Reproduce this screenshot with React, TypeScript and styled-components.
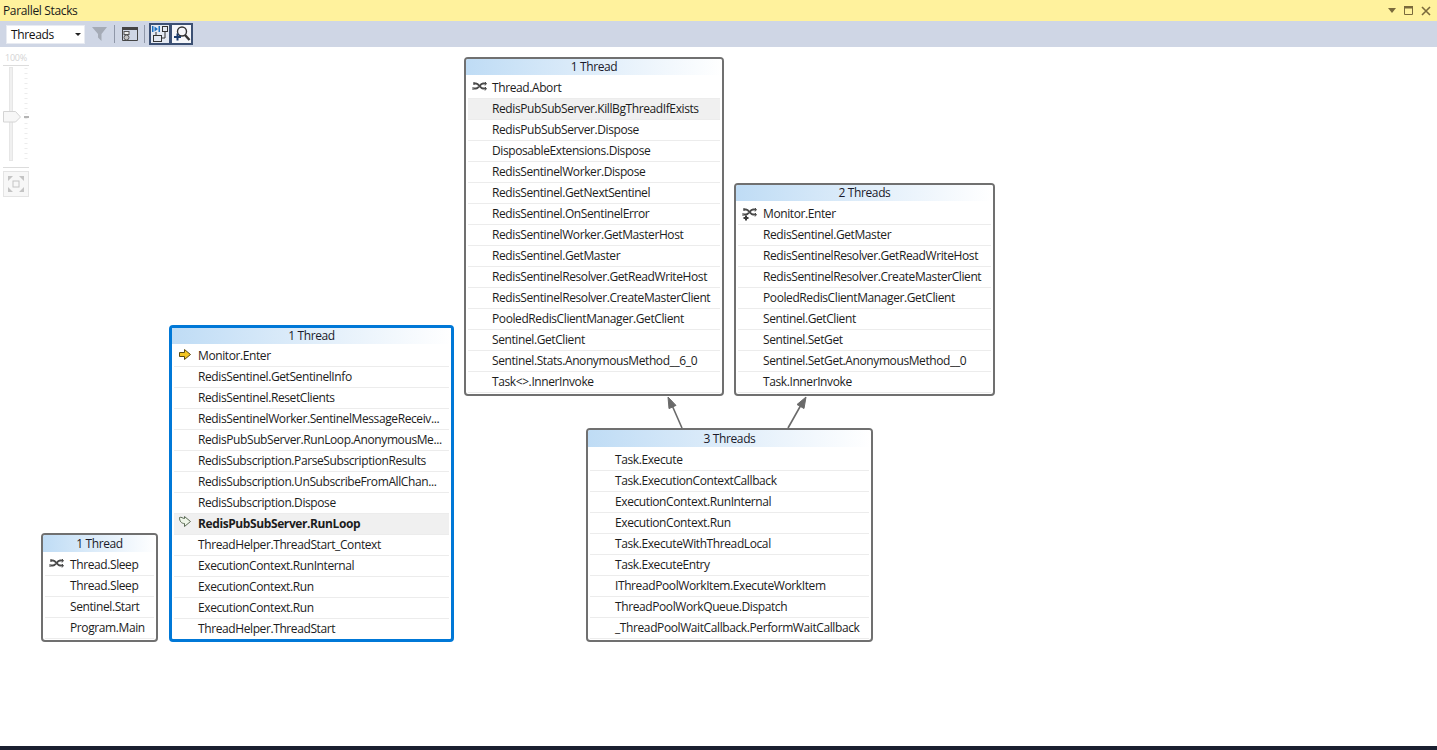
import styled, { createGlobalStyle } from 'styled-components';

const GlobalStyle = createGlobalStyle`
  html, body { margin: 0; padding: 0; background: #fff; }
  body { font-family: "Open Sans", "Liberation Sans", sans-serif; }
`;

const Page = styled.div`
  width: 1437px;
  height: 750px;
  display: flex;
  flex-direction: column;
  overflow: hidden;
`;

const TitleBar = styled.div`
  height: 21px;
  flex: none;
  background: #fff29d;
  display: flex;
  align-items: center;
  justify-content: space-between;
  padding: 0 6px 0 3px;
  font-size: 12px;
  letter-spacing: -0.35px;
  color: #1a1a1a;
`;

const WindowButtons = styled.div`
  display: flex;
  align-items: center;
  gap: 8px;
  color: #7a6a3c;
`;

const Toolbar = styled.div`
  height: 26px;
  flex: none;
  background: #cfd6e5;
  display: flex;
  align-items: center;
  padding-left: 6px;
`;

const Combo = styled.div`
  width: 79px;
  height: 19px;
  box-sizing: border-box;
  background: #fff;
  border: 1px solid #e8ebf2;
  display: flex;
  align-items: center;
  justify-content: space-between;
  padding: 0 3px 0 4px;
  font-size: 12px;
  letter-spacing: -0.35px;
  color: #111;
  margin-right: 7px;
  &::after {
    content: '';
    border-left: 3px solid transparent;
    border-right: 3px solid transparent;
    border-top: 3px solid #222;
  }
`;

const Separator = styled.div<{ $after: number }>`
  width: 1px;
  height: 18px;
  background: #8f97a8;
  margin: 0 ${(p) => p.$after}px 0 6px;
`;

const ToolIcon = styled.div`
  width: 16px;
  height: 16px;
  display: flex;
`;

const ToggleGroup = styled.div`
  display: flex;
`;

const ToggleButton = styled.div<{ $light?: boolean }>`
  width: 22px;
  height: 22px;
  box-sizing: border-box;
  border: 2px solid #3c5073;
  background: ${(p) => (p.$light ? '#f6f7fa' : '#e4e9f2')};
  display: flex;
  align-items: center;
  justify-content: center;
  & + & {
    border-left-width: 1px;
  }
`;

const Canvas = styled.div`
  flex: 1;
  position: relative;
  background: #fff;
`;

const ZoomPanel = styled.div`
  position: absolute;
  left: 3px;
  top: 4px;
  width: 26px;
  display: flex;
  flex-direction: column;
  align-items: center;
`;

const ZoomLabel = styled.div`
  width: 26px;
  height: 14px;
  text-align: center;
  font-size: 9px;
  line-height: 13px;
  letter-spacing: -0.2px;
  color: #d4d4d4;
  border-bottom: 1px solid #dcdcdc;
`;

const SliderArea = styled.div`
  height: 101px;
  width: 26px;
  border-bottom: 1px solid #dcdcdc;
`;

const FitButton = styled.div`
  margin-top: 3px;
  width: 26px;
  height: 26px;
  box-sizing: border-box;
  border: 1px solid #e4e4e4;
  background: #f7f7f7;
  display: flex;
  align-items: center;
  justify-content: center;
`;

const Node = styled.div<{ $x: number; $y: number; $w: number; $h: number; $active?: boolean }>`
  position: absolute;
  left: ${(p) => p.$x}px;
  top: ${(p) => p.$y}px;
  width: ${(p) => p.$w}px;
  height: ${(p) => p.$h}px;
  box-sizing: border-box;
  background: #fff;
  border: ${(p) => (p.$active ? '3px solid #0078d7' : '2px solid #707070')};
  border-radius: 4px;
  overflow: hidden;
`;

const NodeHeader = styled.div<{ $h: number; $gap: number }>`
  height: ${(p) => p.$h}px;
  box-sizing: border-box;
  padding-top: ${(p) => p.$h - 16}px;
  line-height: 16px;
  text-align: center;
  font-size: 12px;
  letter-spacing: -0.38px;
  color: #1a1a2a;
  background: linear-gradient(to right, #bfdcf5 0%, #e6f1fb 60%, #ffffff 100%);
  margin-bottom: ${(p) => p.$gap}px;
`;

const Row = styled.div<{ $hl?: boolean; $bold?: boolean; $pad: number }>`
  height: 21px;
  box-sizing: border-box;
  margin: 0 2px;
  padding-left: ${(p) => p.$pad}px;
  position: relative;
  line-height: 20px;
  font-size: 12px;
  letter-spacing: -0.4px;
  white-space: nowrap;
  color: #1c1c1c;
  font-weight: ${(p) => (p.$bold ? 700 : 400)};
  background: ${(p) => (p.$hl ? '#f0f0f0' : 'transparent')};
  border-bottom: 1px solid #ececec;
`;

const RowIcon = styled.span`
  position: absolute;
  left: 4px;
  top: 2px;
  display: flex;
`;

const Arrows = styled.svg`
  position: absolute;
  left: 0;
  top: 0;
  width: 1437px;
  height: 699px;
  pointer-events: none;
`;

const TaskBar = styled.div`
  height: 4px;
  flex: none;
  background: #1a2030;
`;

type IconKind = 'wait' | 'waitMulti' | 'current' | 'context';

function StatusIcon({ kind }: { kind: IconKind }) {
  if (kind === 'current') {
    return (
      <svg width="14" height="14" viewBox="0 0 14 14">
        <path d="M1.5 4.5h5V1.5L12.5 6.5l-6 5V8.5h-5z" fill="#f3c623" stroke="#5a4a10" strokeWidth="1" />
      </svg>
    );
  }
  if (kind === 'context') {
    return (
      <svg width="14" height="14" viewBox="0 0 14 14">
        <path d="M1.5 1.5c2-1 3 1 5 1h0V.5l6 5-6 5V7.5c-3 0-5-2-5-6z" fill="#eef5e8" stroke="#5b6b55" strokeWidth="1" />
      </svg>
    );
  }
  return (
    <svg width="16" height="15" viewBox="0 0 16 15">
      <path d="M1.5 3.5l2.5 0c3 0 4 5 7 5l3 0M1.5 8.5l2.5 0c3 0 4-5 7-5l3 0" fill="none" stroke="#4a4a4a" strokeWidth="2" />
      <path d="M2 2v3M13 7l1.5 1.5-1.5 2M13 2l1.5 1.5-1.5 2M1 7v3" fill="none" stroke="#4a4a4a" strokeWidth="1" />
      {kind === 'waitMulti' && <path d="M4 9.5v5M1.5 12h5" stroke="#3a3a3a" strokeWidth="2" />}
    </svg>
  );
}

type RowData = { t: string; icon?: IconKind; hl?: boolean; bold?: boolean };

type NodeData = {
  title: string;
  x: number;
  y: number;
  w: number;
  h: number;
  headerH: number;
  gap: number;
  active?: boolean;
  rows: RowData[];
};

const nodes: NodeData[] = [
  {
    title: '1 Thread', x: 464, y: 10, w: 260, h: 339, headerH: 16, gap: 3,
    rows: [
      { t: 'Thread.Abort', icon: 'wait' },
      { t: 'RedisPubSubServer.KillBgThreadIfExists', hl: true },
      { t: 'RedisPubSubServer.Dispose' },
      { t: 'DisposableExtensions.Dispose' },
      { t: 'RedisSentinelWorker.Dispose' },
      { t: 'RedisSentinel.GetNextSentinel' },
      { t: 'RedisSentinel.OnSentinelError' },
      { t: 'RedisSentinelWorker.GetMasterHost' },
      { t: 'RedisSentinel.GetMaster' },
      { t: 'RedisSentinelResolver.GetReadWriteHost' },
      { t: 'RedisSentinelResolver.CreateMasterClient' },
      { t: 'PooledRedisClientManager.GetClient' },
      { t: 'Sentinel.GetClient' },
      { t: 'Sentinel.Stats.AnonymousMethod__6_0' },
      { t: 'Task<>.InnerInvoke' },
    ],
  },
  {
    title: '2 Threads', x: 734, y: 136, w: 261, h: 213, headerH: 16, gap: 3,
    rows: [
      { t: 'Monitor.Enter', icon: 'waitMulti' },
      { t: 'RedisSentinel.GetMaster' },
      { t: 'RedisSentinelResolver.GetReadWriteHost' },
      { t: 'RedisSentinelResolver.CreateMasterClient' },
      { t: 'PooledRedisClientManager.GetClient' },
      { t: 'Sentinel.GetClient' },
      { t: 'Sentinel.SetGet' },
      { t: 'Sentinel.SetGet.AnonymousMethod__0' },
      { t: 'Task.InnerInvoke' },
    ],
  },
  {
    title: '3 Threads', x: 586, y: 381, w: 287, h: 214, headerH: 17, gap: 3,
    rows: [
      { t: 'Task.Execute' },
      { t: 'Task.ExecutionContextCallback' },
      { t: 'ExecutionContext.RunInternal' },
      { t: 'ExecutionContext.Run' },
      { t: 'Task.ExecuteWithThreadLocal' },
      { t: 'Task.ExecuteEntry' },
      { t: 'IThreadPoolWorkItem.ExecuteWorkItem' },
      { t: 'ThreadPoolWorkQueue.Dispatch' },
      { t: '_ThreadPoolWaitCallback.PerformWaitCallback' },
    ],
  },
  {
    title: '1 Thread', x: 169, y: 278, w: 285, h: 317, headerH: 16, gap: 2, active: true,
    rows: [
      { t: 'Monitor.Enter', icon: 'current' },
      { t: 'RedisSentinel.GetSentinelInfo' },
      { t: 'RedisSentinel.ResetClients' },
      { t: 'RedisSentinelWorker.SentinelMessageReceiv...' },
      { t: 'RedisPubSubServer.RunLoop.AnonymousMe...' },
      { t: 'RedisSubscription.ParseSubscriptionResults' },
      { t: 'RedisSubscription.UnSubscribeFromAllChan...' },
      { t: 'RedisSubscription.Dispose' },
      { t: 'RedisPubSubServer.RunLoop', icon: 'context', hl: true, bold: true },
      { t: 'ThreadHelper.ThreadStart_Context' },
      { t: 'ExecutionContext.RunInternal' },
      { t: 'ExecutionContext.Run' },
      { t: 'ExecutionContext.Run' },
      { t: 'ThreadHelper.ThreadStart' },
    ],
  },
  {
    title: '1 Thread', x: 41, y: 486, w: 117, h: 109, headerH: 17, gap: 3,
    rows: [
      { t: 'Thread.Sleep', icon: 'wait' },
      { t: 'Thread.Sleep' },
      { t: 'Sentinel.Start' },
      { t: 'Program.Main' },
    ],
  },
];

function StackNode({ node }: { node: NodeData }) {
  const pad = node.x === 464 ? 24 : node.active ? 24 : 25;
  return (
    <Node $x={node.x} $y={node.y} $w={node.w} $h={node.h} $active={node.active}>
      <NodeHeader $h={node.headerH} $gap={node.gap}>{node.title}</NodeHeader>
      {node.rows.map((r, i) => (
        <Row key={i} $hl={r.hl} $bold={r.bold} $pad={pad}>
          {r.icon && (
            <RowIcon>
              <StatusIcon kind={r.icon} />
            </RowIcon>
          )}
          {r.t}
        </Row>
      ))}
    </Node>
  );
}

export default function App() {
  return (
    <Page>
      <GlobalStyle />
      <TitleBar>
        <span>Parallel Stacks</span>
        <WindowButtons>
          <svg width="8" height="5" viewBox="0 0 8 5">
            <path d="M0 0h8L4 5z" fill="currentColor" />
          </svg>
          <svg width="9" height="9" viewBox="0 0 9 9">
            <path d="M.5.5h8v8h-8z" fill="none" stroke="currentColor" />
            <path d="M0 0h9v2.5H0z" fill="currentColor" />
          </svg>
          <svg width="10" height="10" viewBox="0 0 10 10">
            <path d="M1 1l8 8M9 1l-8 8" stroke="currentColor" strokeWidth="1.6" />
          </svg>
        </WindowButtons>
      </TitleBar>
      <Toolbar>
        <Combo>Threads</Combo>
        <ToolIcon>
          <svg width="16" height="16" viewBox="0 0 16 16">
            <path d="M0 1h15L9.5 8v7L6 11.5V8z" fill="#a5abb6" />
          </svg>
        </ToolIcon>
        <Separator $after={7} />
        <ToolIcon>
          <svg width="16" height="16" viewBox="0 0 16 16">
            <path d="M.5 1.5h15v13h-15z" fill="none" stroke="#444" />
            <path d="M0 1h16v3H0z" fill="#444" />
            <rect x="2" y="5.5" width="5" height="3" fill="#eee" stroke="#555" />
            <circle cx="4.5" cy="11.5" r="2.5" fill="#c4c4c4" stroke="#555" />
          </svg>
        </ToolIcon>
        <Separator $after={4} />
        <ToggleGroup>
          <ToggleButton>
            <svg width="18" height="18" viewBox="0 0 18 18">
              <path d="M1 1h1.5v6H1zM3.5 1.5L7 4 3.5 6.5zM7.5 1h1.5v6H7.5z" fill="#1a6fc0" />
              <rect x="11.5" y="1.5" width="5" height="5" fill="none" stroke="#333" />
              <rect x="2.5" y="10.5" width="8" height="6" fill="none" stroke="#333" />
              <path d="M14 7v6h-3.5M5 7v3.5" fill="none" stroke="#333" />
            </svg>
          </ToggleButton>
          <ToggleButton $light>
            <svg width="18" height="18" viewBox="0 0 18 18">
              <circle cx="9" cy="6.5" r="4.5" fill="none" stroke="#333" strokeWidth="1.4" />
              <path d="M12 10l4.5 5" stroke="#333" strokeWidth="2.4" />
              <path d="M1 12h7M4.5 8.5v7" stroke="#1c3d6e" strokeWidth="2" />
            </svg>
          </ToggleButton>
        </ToggleGroup>
      </Toolbar>
      <Canvas>
        <ZoomPanel>
          <ZoomLabel>100%</ZoomLabel>
          <SliderArea>
            <svg width="26" height="101" viewBox="0 0 26 101">
              <rect x="6.5" y="1.5" width="3" height="93" fill="#f0f0f0" stroke="#e6e6e6" />
              <path d="M23 2v92" stroke="#ececec" strokeWidth="3" strokeDasharray="1 4" />
              <rect x="21" y="50" width="5" height="2" fill="#b5b5b5" />
              <path d="M.5 45.5h12l5 5.5-5 5H.5z" fill="#f7f7f7" stroke="#d4d4d4" />
            </svg>
          </SliderArea>
          <FitButton>
            <svg width="18" height="18" viewBox="0 0 18 18">
              <rect x="6" y="6" width="6" height="6" fill="none" stroke="#c4c4c4" />
              <path d="M1 1h5L1 6zM17 1h-5l5 5zM1 17h5l-5-5zM17 17h-5l5-5z" fill="#c4c4c4" />
            </svg>
          </FitButton>
        </ZoomPanel>
        {nodes.map((n, i) => (
          <StackNode key={i} node={n} />
        ))}
        <Arrows viewBox="0 0 1437 699">
          <g stroke="#6a6a6a" strokeWidth="1.6" fill="#6a6a6a">
            <path d="M682 381l-11-25" />
            <path strokeWidth="1" d="M668 350l8 8.4-7 3.2z" />
            <path d="M788 381l13-23" />
            <path strokeWidth="1" d="M806 350l-2 11.5-7-4z" />
          </g>
        </Arrows>
      </Canvas>
      <TaskBar />
    </Page>
  );
}
